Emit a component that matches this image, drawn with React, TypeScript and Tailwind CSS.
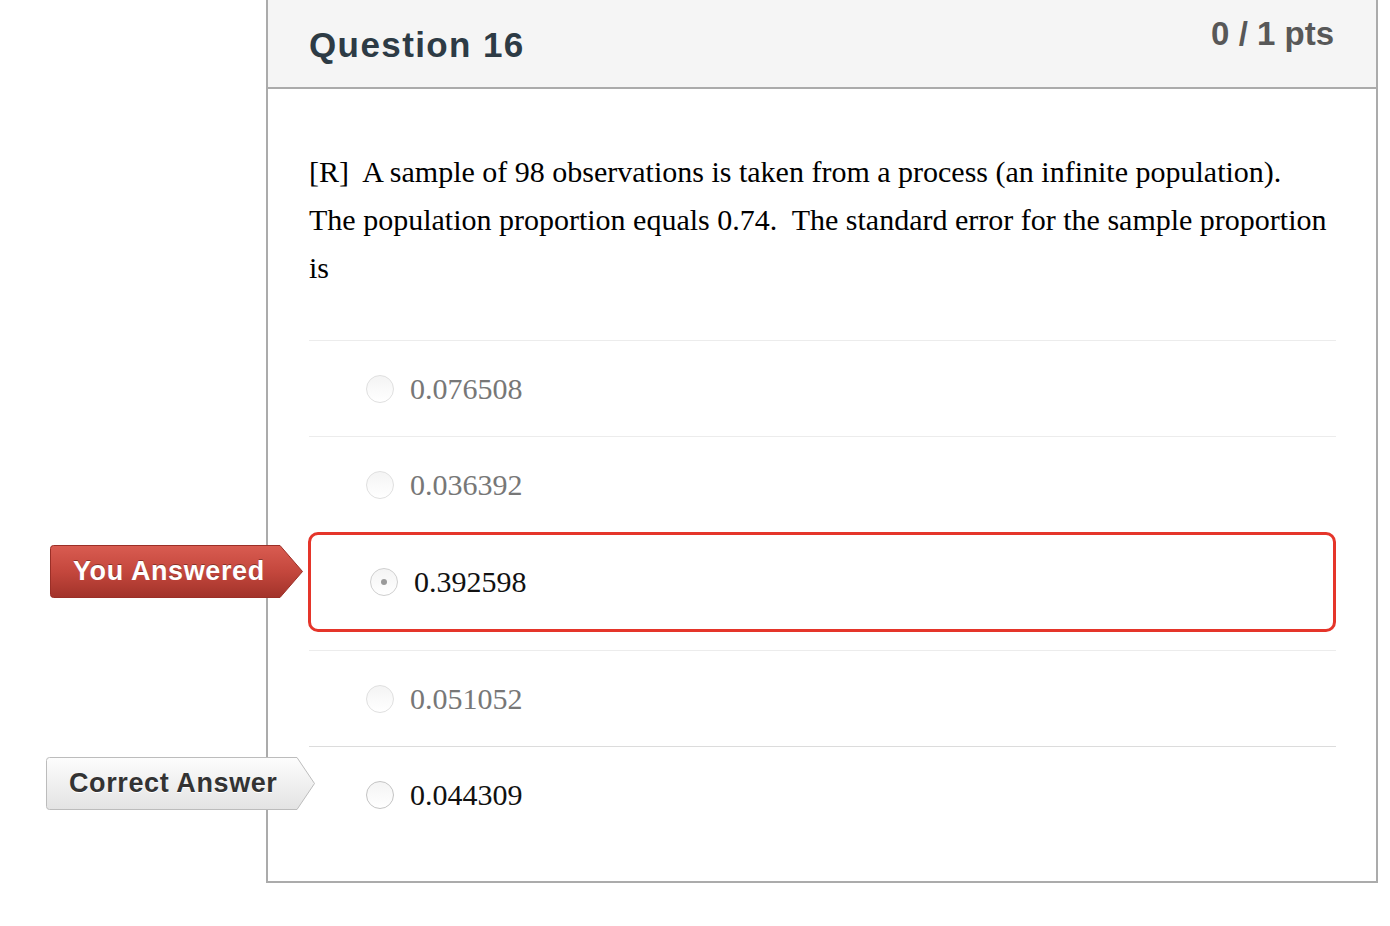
import React from "react";

function Radio({ checked = false, dark = false }: { checked?: boolean; dark?: boolean }) {
  return (
    <div
      className={
        "flex h-[28px] w-[28px] shrink-0 items-center justify-center rounded-full border bg-gradient-to-b from-[#f4f4f4] to-white " +
        (dark ? "border-[#c4c4c4]" : checked ? "border-[#cfcfcf]" : "border-[#e0e0e0]")
      }
    >
      {checked && <div className="h-[6px] w-[6px] rounded-full bg-[#9a9a9a]" />}
    </div>
  );
}

function Ribbon({
  label,
  width,
  body,
  variant,
}: {
  label: string;
  width: number;
  body: number;
  variant: "red" | "gray";
}) {
  const h = 53;
  const id = variant === "red" ? "gradRed" : "gradGray";
  return (
    <div className="relative flex h-[53px] items-center pl-[23px]" style={{ width }}>
      <svg className="absolute left-0 top-0" width={width} height={h} viewBox={`0 0 ${width} ${h}`}>
        <defs>
          {variant === "red" ? (
            <linearGradient id={id} x1="0" y1="0" x2="0" y2="1">
              <stop offset="0" stopColor="#d95c51" />
              <stop offset="0.5" stopColor="#c4473d" />
              <stop offset="1" stopColor="#a2332a" />
            </linearGradient>
          ) : (
            <linearGradient id={id} x1="0" y1="0" x2="0" y2="1">
              <stop offset="0" stopColor="#fdfdfd" />
              <stop offset="1" stopColor="#e3e3e3" />
            </linearGradient>
          )}
        </defs>
        <path
          d={`M3.5 0.5 H${body} L${width - 0.5} ${h / 2} L${body} ${h - 0.5} H3.5 Q0.5 ${h - 0.5} 0.5 ${h - 3.5} V3.5 Q0.5 0.5 3.5 0.5 Z`}
          fill={`url(#${id})`}
          stroke={variant === "red" ? "#9b2f27" : "#bcbcbc"}
          strokeWidth="1"
        />
      </svg>
      <span
        className={
          "relative font-['Liberation_Sans',Arial,sans-serif] text-[27px] font-bold leading-none tracking-[0.6px] " +
          (variant === "red"
            ? "text-white [text-shadow:0_-1px_0_rgba(0,0,0,0.35)]"
            : "text-[#333] [text-shadow:0_1px_0_#fff]")
        }
      >
        {label}
      </span>
    </div>
  );
}

function Row({ value, top = "border-[#ececec]" }: { value: string; top?: string }) {
  return (
    <div className={"flex h-[96px] items-center border-t pl-[57px] " + top}>
      <Radio />
      <span className="ml-[16px] text-[30px] leading-none text-[#777]">{value}</span>
    </div>
  );
}

export default function App() {
  return (
    <div className="min-h-[926px] w-full bg-white font-['Liberation_Serif','Times_New_Roman',serif]">
      <div className="ml-[266px] w-[1112px] border-x-2 border-b-2 border-[#ababab]">
        <header className="flex h-[89px] justify-between border-b-2 border-[#ababab] bg-[#f5f5f5] pl-[41px] pr-[42px] font-['Liberation_Sans',Arial,sans-serif]">
          <h2 className="pt-[27px] text-[35px] font-bold leading-none tracking-[1.4px] text-[#2d3b45]">
            Question 16
          </h2>
          <div className="pt-[17px] text-[33px] font-bold leading-none text-[#585858]">0 / 1 pts</div>
        </header>

        <div className="pb-[39px] pl-[41px] pr-[40px] pt-[59px]">
          <p className="text-[30px] leading-[48px] text-black">
            [R]&nbsp; A sample of 98 observations is taken from a process (an infinite population).
            <br />
            The population proportion equals 0.74.&nbsp; The standard error for the sample proportion is
          </p>

          <div className="mt-[48px]">
            <Row value="0.076508" />
            <Row value="0.036392" />

            <div className="relative -ml-px flex h-[100px] items-center rounded-[10px] border-[3px] border-[#e5352a] pl-[59px]">
              <div className="absolute left-[-261px] top-[10px]">
                <Ribbon label="You Answered" width={253} body={230} variant="red" />
              </div>
              <Radio checked />
              <span className="ml-[16px] text-[30px] leading-none text-[#111]">0.392598</span>
            </div>

            <div className="mt-[18px]">
              <Row value="0.051052" />
            </div>

            <div className="relative flex h-[96px] items-center border-t border-[#dcdcdc] pl-[57px]">
              <div className="absolute left-[-263px] top-[10px]">
                <Ribbon label="Correct Answer" width={269} body={251} variant="gray" />
              </div>
              <Radio dark />
              <span className="ml-[16px] text-[30px] leading-none text-[#111]">0.044309</span>
            </div>
          </div>
        </div>
      </div>
    </div>
  );
}
